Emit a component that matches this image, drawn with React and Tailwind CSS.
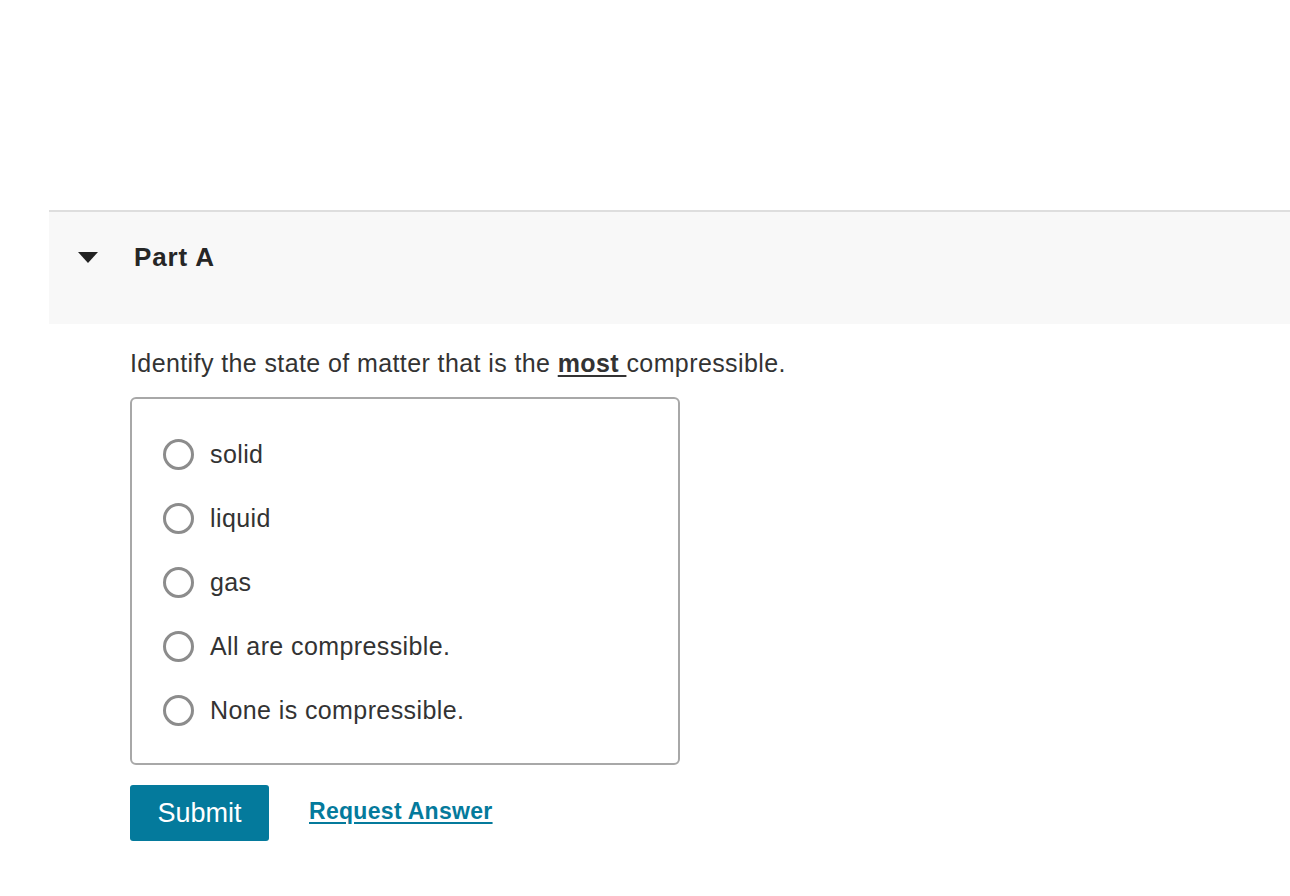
const OPTIONS = ["solid", "liquid", "gas", "All are compressible.", "None is compressible."];

export default function App() {
    return (
        <div className="min-h-[896px] w-[1290px] bg-white text-[#333333] font-['Liberation_Sans',Arial,sans-serif]">
            <div className="h-[210px]" />
            <div className="ml-[49px] border-t-2 border-[#dedede] bg-[#f8f8f8] h-[114px] flex items-start pt-[32px]">
                <svg width="20" height="11" viewBox="0 0 20 11" className="ml-[29px] mt-[8px]">
                    <polygon points="0,0 20,0 10,11" fill="#222222" />
                </svg>
                <h2 className="ml-[36px] text-[26px] tracking-[0.9px] font-bold text-[#262626] leading-none">Part A</h2>
            </div>

            <div className="pl-[130px] pt-[24px]">
                <p className="text-[25px] tracking-[0.4px] leading-[30px]">
                    Identify the state of matter that is the <strong className="underline underline-offset-[3px]">most </strong>compressible.
                </p>

                <div className="mt-[19px] w-[550px] border-2 border-[#a8a8a8] rounded-[6px] pt-[23px] pb-[21px] pl-[31px]">
                    {OPTIONS.map(opt => (
                        <label key={opt} className="h-[64px] flex items-center cursor-pointer">
                            <span className="w-[31px] h-[31px] rounded-full border-[3px] border-[#8c8c8c] bg-white flex-shrink-0" />
                            <span className="ml-[16px] text-[25px] tracking-[0.4px] leading-none">{opt}</span>
                        </label>
                    ))}
                </div>

                <div className="mt-[20px] flex items-center">
                    <button className="w-[139px] h-[56px] rounded-[3px] bg-[#047a9c] text-white text-[27px] leading-none">Submit</button>
                    <a href="#" className="ml-[40px] text-[23px] tracking-[0.3px] font-bold text-[#047a9c] underline underline-offset-[3px] mb-[4px]">Request Answer</a>
                </div>
            </div>
        </div>
    );
}
